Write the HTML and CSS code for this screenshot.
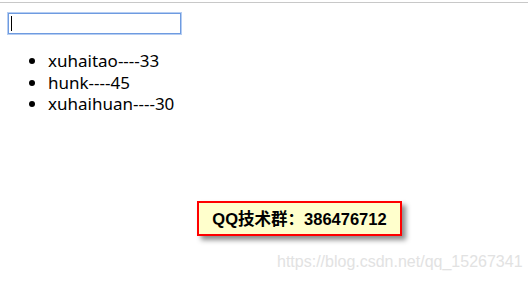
FILE: index.html
```html
<!DOCTYPE html>
<html lang="en">
<head>
    <meta charset="UTF-8">
    <meta name="viewport" content="width=device-width, initial-scale=1.0">
    <title>Users</title>
    <link rel="stylesheet" href="styles.css">
</head>
<body>
    <div class="page">
        <div class="search-wrap">
            <input type="text" class="search" autofocus>
            <span class="caret"></span>
        </div>
        <ul class="user-list">
            <li>xuhaitao----33</li>
            <li>hunk----45</li>
            <li>xuhaihuan----30</li>
        </ul>
    </div>

    <div class="qq-notice">QQ技术群：386476712</div>
    <div class="watermark">https://blog.csdn.net/qq_15267341</div>
</body>
</html>
```

FILE: styles.css
```css
* {
    box-sizing: border-box;
}

body {
    margin: 0;
    background: #fff;
    color: #000;
    font-family: 'Noto Sans', 'Liberation Sans', sans-serif;
}

.page {
    margin-top: 2px;
    border-top: 1px solid #c8c8c8;
    padding: 10px 8px;
}

.search-wrap {
    position: relative;
    width: 173px;
}

.search {
    display: block;
    width: 173px;
    height: 21px;
    border: 1px solid #6e9be0;
    outline: 1px solid #b5cdf2;
    padding: 1px 2px;
    font-size: 13px;
    caret-color: transparent;
}

.caret {
    position: absolute;
    left: 3px;
    top: 3px;
    width: 1px;
    height: 15px;
    background: #000;
}

.user-list {
    margin: 16px 0 0;
    padding-left: 40px;
    font-size: 17px;
    line-height: 21.5px;
}

.qq-notice {
    position: absolute;
    left: 197px;
    top: 201px;
    width: 205px;
    height: 35px;
    border: 2px solid #f00;
    background: #ffffcc;
    box-shadow: 4px 4px 5px rgba(0, 0, 0, 0.45);
    font-family: 'Liberation Sans', 'Noto Sans CJK SC', sans-serif;
    font-weight: bold;
    font-size: 16.5px;
    line-height: 33px;
    text-align: center;
}

.watermark {
    position: absolute;
    left: 277px;
    top: 253px;
    color: #e2e2e2;
    font-family: 'Liberation Sans', sans-serif;
    font-size: 16px;
}
```
